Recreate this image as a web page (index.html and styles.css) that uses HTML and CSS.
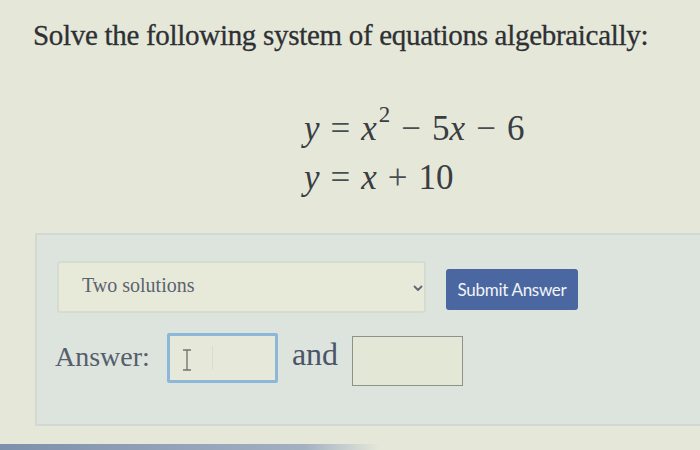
FILE: index.html
```html
<!DOCTYPE html>
<html>
<head>
<meta charset="utf-8">
<link rel="stylesheet" href="styles.css">
</head>
<body>
<div class="page">
  <h1 class="title">Solve the following system of equations algebraically:</h1>
  <div class="system">
    <div class="eq"><i>y</i><span class="op">=</span><i>x</i><span class="sup">2</span><span class="op">−</span>5<i>x</i><span class="op">−</span>6</div>
    <div class="eq"><i>y</i><span class="op">=</span><i>x</i><span class="op">+</span>10</div>
  </div>
  <div class="panel">
    <div class="row">
      <div class="select">
        <span class="select-text">Two solutions</span>
        <svg class="chev" width="10" height="7" viewBox="0 0 10 7"><path d="M1.5 1.5 L5 5 L8.5 1.5" fill="none" stroke="#5d6777" stroke-width="1.8" stroke-linecap="round" stroke-linejoin="round"/></svg>
      </div>
      <button class="submit">Submit Answer</button>
    </div>
    <div class="answer">
      <span class="label">Answer:</span>
      <div class="box focus">
        <svg class="ibeam" width="10" height="22" viewBox="0 0 10 22"><path d="M1 1 H9 M5 1 V21 M1 21 H9" fill="none" stroke="#6f7270" stroke-width="1.3"/></svg>
        <span class="caret"></span>
      </div>
      <span class="and">and</span>
      <div class="box plain"></div>
    </div>
  </div>
  <div class="footer"><span class="bar"></span></div>
</div>
</body>
</html>
```
FILE: styles.css
```css
html, body {
  margin: 0;
  padding: 0;
}
body {
  width: 700px;
  height: 450px;
  overflow: hidden;
  background: #e5e8d9;
  font-family: "Liberation Serif", "Times New Roman", serif;
}
.page {
  display: flex;
  flex-direction: column;
  height: 450px;
}
.title {
  margin: 17px 0 0 33px;
  font-size: 29px;
  font-weight: normal;
  color: #2e3033;
  letter-spacing: -0.3px;
  line-height: 36px;
  -webkit-text-stroke: 0.3px #2e3033;
}
.system {
  margin: 50px 0 0 304px;
}
.eq {
  font-family: "Liberation Serif", "DejaVu Serif", serif;
  font-size: 35px;
  line-height: 50px;
  height: 50px;
  color: #3a3d42;
  white-space: nowrap;
}
.eq i {
  font-family: "Liberation Serif", "DejaVu Serif", serif;
  font-style: italic;
}
.sup {
  font-size: 23px;
  display: inline-block;
  vertical-align: 18px;
  line-height: 1;
  margin-left: 2px;
}
.op {
  font-family: "Liberation Serif", "DejaVu Serif", serif;
  padding: 0 11px;
  color: #4a4d52;
}
.panel {
  margin: 30px 0 0 35px;
  height: 193px;
  background: #dde4de;
  border: 2px solid #d2d9d5;
  border-right: none;
  padding: 26px 0 0 20px;
  box-sizing: border-box;
}
.row {
  display: flex;
  align-items: flex-start;
  gap: 20px;
}
.select {
  width: 369px;
  height: 52px;
  box-sizing: border-box;
  background: #e8ead9;
  border: 2px solid #d6dbd2;
  border-radius: 3px;
  display: flex;
  align-items: center;
  justify-content: space-between;
  padding: 0 1px 0 23px;
}
.select-text {
  font-size: 20px;
  color: #5b6271;
  margin-top: -4px;
}
.chev {
  margin-top: 2px;
}
.submit {
  margin-top: 8px;
  width: 132px;
  height: 41px;
  background: #4b67a1;
  border: none;
  border-radius: 3px;
  color: #f2f4f8;
  font-family: Lato, "Liberation Sans", sans-serif;
  font-size: 17px;
  letter-spacing: -0.3px;
  padding: 0;
}
.answer {
  display: flex;
  align-items: flex-start;
  margin-top: 20px;
  margin-left: -2px;
}
.label {
  font-size: 28px;
  line-height: 32px;
  color: #565e6b;
  margin: 8px 17px 0 0;
}
.box {
  width: 111px;
  height: 50px;
  box-sizing: border-box;
  background: #e6e8da;
}
.focus {
  border: 3px solid #8db7d6;
  border-radius: 2px;
  display: flex;
  align-items: center;
  padding-left: 12px;
  gap: 20px;
}
.ibeam {
  margin-top: 4px;
}
.caret {
  width: 1px;
  height: 24px;
  background: #d9dcd4;
}
.and {
  font-size: 32px;
  line-height: 36px;
  color: #4b5568;
  margin: 3px 14px 0 14px;
}
.plain {
  border: 1.5px solid #8f928a;
  margin-top: 3px;
  background: #e3e7d6;
}
.footer {
  flex: 1;
  display: flex;
  align-items: flex-end;
}
.bar {
  display: block;
  width: 380px;
  height: 6px;
  background: linear-gradient(to right, #7d90ab, #a3b0c2 80%, rgba(200,208,215,0));
}
```
